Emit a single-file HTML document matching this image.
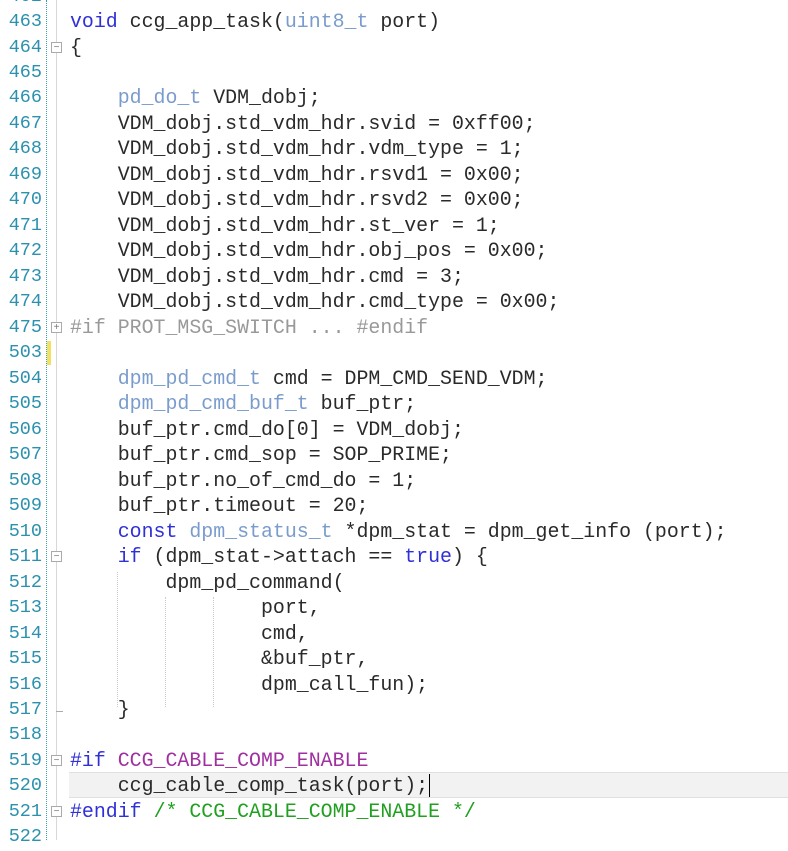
<!DOCTYPE html><html><head><style>
body{margin:0;background:#fff;width:788px;height:840px;overflow:hidden;position:relative;font-family:"Liberation Mono","Courier New",monospace;}
.r{position:absolute;left:0;height:25.48px;width:788px;line-height:26.5px;font-size:19.9px;white-space:pre;}
.n{position:absolute;right:746px;color:#2b91af;font-family:"Liberation Mono",monospace;font-size:18.5px;}
.c{position:absolute;left:70px;color:#2a2a2a;}
.k{color:#3030d8}.t{color:#7a9ccc}.p{color:#3030d8}.g{color:#999}.m{color:#a030a0}.cm{color:#20a020}
.box{position:absolute;left:51px;top:7px;width:9px;height:9px;border:1px solid #aaa;background:#fff;font-size:10px;line-height:9px;text-align:center;color:#777;font-family:"Liberation Sans",sans-serif}
</style></head><body>
<div style="position:absolute;left:46px;top:0;height:840px;border-left:1px dotted #3aa0a8"></div>
<div style="position:absolute;left:56px;top:0;height:840px;border-left:1px solid #d8d8d8"></div>
<div style="position:absolute;left:47px;top:341px;width:4px;height:24px;background:#f2e060"></div>
<div style="position:absolute;left:69px;top:772px;width:719px;height:24px;background:#f2f2f2;border-top:1px solid #e0e0e0;border-bottom:1px solid #e0e0e0"></div>
<div style="position:absolute;left:117px;top:572px;height:135px;border-left:1px dotted #ccc"></div>
<div style="position:absolute;left:165px;top:597px;height:110px;border-left:1px dotted #ccc"></div>
<div style="position:absolute;left:213px;top:597px;height:110px;border-left:1px dotted #ccc"></div>
<div style="position:absolute;left:56px;top:711px;width:7px;border-top:1px solid #aaa"></div>

<div class="r" style="top:-16.5px"><span class="n">462</span></div>
<div class="r" style="top:9px"><span class="n">463</span><span class="c"><span class="k">void</span> ccg_app_task(<span class="t">uint8_t</span> port)</span></div>
<div class="r" style="top:34.5px"><span class="n">464</span><span class="box">−</span><span class="c">{</span></div>
<div class="r" style="top:60px"><span class="n">465</span></div>
<div class="r" style="top:85.4px"><span class="n">466</span><span class="c">    <span class="t">pd_do_t</span> VDM_dobj;</span></div>
<div class="r" style="top:110.9px"><span class="n">467</span><span class="c">    VDM_dobj.std_vdm_hdr.svid = 0xff00;</span></div>
<div class="r" style="top:136.4px"><span class="n">468</span><span class="c">    VDM_dobj.std_vdm_hdr.vdm_type = 1;</span></div>
<div class="r" style="top:161.9px"><span class="n">469</span><span class="c">    VDM_dobj.std_vdm_hdr.rsvd1 = 0x00;</span></div>
<div class="r" style="top:187.4px"><span class="n">470</span><span class="c">    VDM_dobj.std_vdm_hdr.rsvd2 = 0x00;</span></div>
<div class="r" style="top:212.8px"><span class="n">471</span><span class="c">    VDM_dobj.std_vdm_hdr.st_ver = 1;</span></div>
<div class="r" style="top:238.3px"><span class="n">472</span><span class="c">    VDM_dobj.std_vdm_hdr.obj_pos = 0x00;</span></div>
<div class="r" style="top:263.8px"><span class="n">473</span><span class="c">    VDM_dobj.std_vdm_hdr.cmd = 3;</span></div>
<div class="r" style="top:289.3px"><span class="n">474</span><span class="c">    VDM_dobj.std_vdm_hdr.cmd_type = 0x00;</span></div>
<div class="r" style="top:314.8px"><span class="n">475</span><span class="box">+</span><span class="c g">#if PROT_MSG_SWITCH ... #endif</span></div>
<div class="r" style="top:340.2px"><span class="n">503</span></div>
<div class="r" style="top:365.7px"><span class="n">504</span><span class="c">    <span class="t">dpm_pd_cmd_t</span> cmd = DPM_CMD_SEND_VDM;</span></div>
<div class="r" style="top:391.2px"><span class="n">505</span><span class="c">    <span class="t">dpm_pd_cmd_buf_t</span> buf_ptr;</span></div>
<div class="r" style="top:416.7px"><span class="n">506</span><span class="c">    buf_ptr.cmd_do[0] = VDM_dobj;</span></div>
<div class="r" style="top:442.2px"><span class="n">507</span><span class="c">    buf_ptr.cmd_sop = SOP_PRIME;</span></div>
<div class="r" style="top:467.6px"><span class="n">508</span><span class="c">    buf_ptr.no_of_cmd_do = 1;</span></div>
<div class="r" style="top:493.1px"><span class="n">509</span><span class="c">    buf_ptr.timeout = 20;</span></div>
<div class="r" style="top:518.6px"><span class="n">510</span><span class="c">    <span class="k">const</span> <span class="t">dpm_status_t</span> *dpm_stat = dpm_get_info (port);</span></div>
<div class="r" style="top:544.1px"><span class="n">511</span><span class="box">−</span><span class="c">    <span class="k">if</span> (dpm_stat-&gt;attach == <span class="k">true</span>) {</span></div>
<div class="r" style="top:569.6px"><span class="n">512</span><span class="c">        dpm_pd_command(</span></div>
<div class="r" style="top:595px"><span class="n">513</span><span class="c">                port,</span></div>
<div class="r" style="top:620.5px"><span class="n">514</span><span class="c">                cmd,</span></div>
<div class="r" style="top:646px"><span class="n">515</span><span class="c">                &amp;buf_ptr,</span></div>
<div class="r" style="top:671.5px"><span class="n">516</span><span class="c">                dpm_call_fun);</span></div>
<div class="r" style="top:697px"><span class="n">517</span><span class="c">    }</span></div>
<div class="r" style="top:722.4px"><span class="n">518</span></div>
<div class="r" style="top:747.9px"><span class="n">519</span><span class="box">−</span><span class="c"><span class="p">#if</span> <span class="m">CCG_CABLE_COMP_ENABLE</span></span></div>
<div class="r" style="top:773.4px"><span class="n">520</span><span class="c">    ccg_cable_comp_task(port);<span style="border-left:1.5px solid #000;margin-left:1px"></span></span></div>
<div class="r" style="top:798.9px"><span class="n">521</span><span class="box">−</span><span class="c"><span class="p">#endif</span> <span class="cm">/* CCG_CABLE_COMP_ENABLE */</span></span></div>
<div class="r" style="top:824.4px"><span class="n">522</span></div>
</body></html>
